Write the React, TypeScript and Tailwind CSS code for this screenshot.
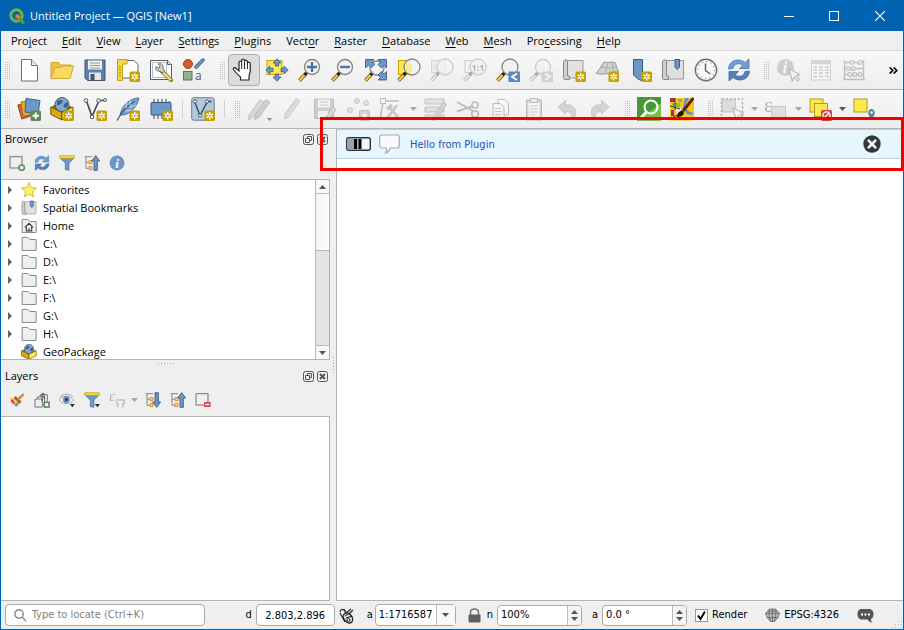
import { ReactNode } from 'react';

/* ---------- icons ---------- */

interface SvgProps {
    size?: number;
    faded?: boolean;
    children: ReactNode;
}

function Svg({ size = 24, faded, children }: SvgProps) {
    return (
        <svg width={size} height={size} viewBox="0 0 24 24" fill="none" className={faded ? 'shrink-0 opacity-35 grayscale' : 'shrink-0'} aria-hidden="true">
            {children}
        </svg>
    );
}

const StarBadge = () => (
    <g>
        <rect x="13.5" y="13.5" width="10.5" height="10.5" rx="1.5" fill="#c4a000" />
        <path d="M18.75 15v7.5M15.5 16.9l6.5 3.7M22 16.9l-6.5 3.7" stroke="#fff" strokeWidth="1.4" />
        <circle cx="18.75" cy="18.75" r="1" fill="#c4a000" />
    </g>
);

const Lens = ({ x = 14, y = 9, r = 7.5 }) => (
    <g>
        <path d="M1.5 22.5l6.5-7" stroke="#5c4a12" strokeWidth="3.6" />
        <path d="M1.8 22.2l5-5.4" stroke="#fcd03a" strokeWidth="2.2" />
        <path d="M6.5 17l3-3" stroke="#1d1d1d" strokeWidth="2.6" />
        <circle cx={x} cy={y} r={r} fill="#f1f1ef" fillOpacity="0.85" stroke="#858585" strokeWidth="1.3" />
    </g>
);

const NewFile = () => (
    <Svg><path d="M4.5 1.5h10l6 6v15.5h-16z" fill="#fff" stroke="#6d6d6d" /><path d="M14.5 1.5v6h6" fill="#e6e6e6" stroke="#6d6d6d" /></Svg>
);

const OpenFolder = () => (
    <Svg>
        <path d="M1 20V4.5h7.5l2 2.5H21v4" fill="#edc23f" stroke="#cfa52e" />
        <path d="M1 20.5L5 9.5h6l2-1.5h10.5l-3.5 12.5z" fill="#fdd95f" stroke="#d3a93a" />
    </Svg>
);

const Save = () => (
    <Svg>
        <path d="M2 2h20v20.5H4.5L2 20z" fill="#5b7fae" stroke="#40546e" />
        <rect x="5" y="2.5" width="14" height="9" fill="#f1f1f1" />
        <path d="M7 5h10M7 7.5h10M7 10h10" stroke="#999" />
        <rect x="6" y="14.5" width="12" height="7.5" fill="#e4e4e4" />
        <rect x="7.5" y="16" width="4" height="6" fill="#45556c" />
    </Svg>
);

const NewLayout = () => (
    <Svg>
        <path d="M5 2.5h13l4 4V20H5z" fill="#fff" stroke="#666" />
        <path d="M1.5 1.5h9.5v4.5H6.5v16.5h-5z" fill="#f6d54c" stroke="#c4a000" />
        <path d="M3 9h2M3 12h2M3 15h2M3 18h2" stroke="#a18400" />
        <StarBadge />
    </Svg>
);

const LayoutManager = () => (
    <Svg>
        <path d="M1.5 2.5h17l4 4v15h-21z" fill="#fff" stroke="#5c5c5c" />
        <path d="M3.5 4.5h14v15h-14z" stroke="#a8bbd5" />
        <path d="M18.5 2.5v4h4" stroke="#5c5c5c" fill="#ddd" />
        <path d="M12 12.5l10 9.5" stroke="#8b6f17" strokeWidth="4" strokeLinecap="round" />
        <path d="M14.5 15l7 6.5" stroke="#edd66d" strokeWidth="2.5" strokeLinecap="round" />
        <path d="M7 8.500l3 2 1-3-2-1.500c4-1 6 1 5 5l2 2-3 2-2-2c-3 .5-5-1-4-4.500z" fill="#ccc" stroke="#666" strokeWidth=".9" />
    </Svg>
);

const StyleManager = () => (
    <Svg>
        <circle cx="6" cy="6" r="4.500" fill="#d45e2e" stroke="#a04015" />
        <path d="M14 9l7-7" stroke="#3d5878" strokeWidth="3.500" strokeLinecap="round" />
        <path d="M14 9l7-7" stroke="#6d97c4" strokeWidth="1.800" strokeLinecap="round" />
        <rect x="1.500" y="13.500" width="8.500" height="8.500" fill="#8fb28b" stroke="#4e7d50" />
        <text x="13" y="22" fontSize="12" fill="#555">a</text>
    </Svg>
);

const Hand = () => (
    <Svg>
        <path
            d="M8.500 22v-3C6 17 3.500 14 1.500 11.500c-.7-2 1.500-2.300 2.700-1L7 13V4.500c0-2 2.500-2 2.700 0V2.500c.2-2 2.600-2 2.800 0V3.500c.3-1.800 2.700-1.700 2.900.3v1.400c.4-1.700 2.700-1.500 2.800.5 0 5 1 8-1.200 12.500V22z"
            fill="#fff" stroke="#222" strokeWidth="1.200"
        />
        <path d="M9.700 4.500V11M12.500 3.500V11M15.400 4.500V11" stroke="#222" />
    </Svg>
);

const PanArrows = () => (
    <Svg>
        <rect x="2" y="2.500" width="15" height="14" fill="#fce94f" stroke="#c4a000" />
        <path
            d="M12 .8l4 4.200h-2.400v3h-3.200V5H8zM12 23.200l4-4.200h-2.400v-3h-3.200v3H8zM.8 12L5 8v2.400h3v3.200H5V16zM23.200 12L19 8v2.400h-3v3.200h3V16z"
            fill="#6b97c9" stroke="#375d8a" strokeWidth=".8"
        />
    </Svg>
);

const ZoomIn = () => <Svg><Lens /><path d="M14 4v10M9 9h10" stroke="#4d76a6" strokeWidth="2.400" /></Svg>;
const ZoomOut = () => <Svg><Lens /><path d="M9 9h10" stroke="#4d76a6" strokeWidth="2.400" /></Svg>;

const ZoomFull = () => (
    <Svg>
        <Lens x={13} y={10} r={7} />
        <path
            d="M1.500 1.500h8.500L8 3.500l2.700 2.700-3.500 3.500L4.500 7l-3 3zM22.500 1.500v8.500L20 7.500l-2.500 2.500-3.500-3.500L16.500 4 14 1.500zM22.500 22H14l2.500-2.500-2.500-2.500 3.500-3.500 2.500 2.500 2.500-2.500z"
            fill="#6b97c9" stroke="#375d8a" strokeWidth=".9"
        />
    </Svg>
);

const ZoomSelection = () => (
    <Svg><rect x="1.500" y="2.500" width="10" height="14" fill="#fce94f" stroke="#c4a000" /><Lens x={15} y={9} r={8} /><path d="M9 5.500h6v9l-3 .5-3-2z" fill="#f5ea8b" /></Svg>
);

const ZoomLayer = () => (
    <Svg faded><rect x="1.500" y="2.500" width="10" height="12" fill="#ddd" stroke="#999" /><Lens x={15} y={9} r={8} /><path d="M15 2.500v13" stroke="#bbb" /></Svg>
);

const ZoomNative = () => (
    <Svg faded>
        <rect x="2" y="2.500" width="13" height="12" fill="#eee" stroke="#888" />
        <Lens x={15} y={9} r={8} />
        <text x="15" y="12.500" fontSize="9" fontWeight="700" textAnchor="middle" fill="#333">1:1</text>
    </Svg>
);

const ZoomLast = () => (
    <Svg><Lens x={14} y={9} r={8} /><rect x="12.500" y="13.500" width="11.500" height="10.500" fill="#5b87b9" /><path d="M21 15.500L16 18.700l5 3.200" stroke="#fff" strokeWidth="1.800" /></Svg>
);

const ZoomNext = () => (
    <Svg faded><Lens /><rect x="12.500" y="13.500" width="11.500" height="10.500" fill="#999" /><path d="M16 15.500l5 3.200-5 3.200" stroke="#fff" strokeWidth="1.800" /></Svg>
);

const MapView = () => (
    <Svg>
        <path d="M5 2.500h16V20H5z" fill="#e2e2e2" stroke="#999" />
        <path d="M1.500 4c0-3 4-3 4 0v14h2v3.500H3c-1 0-1.500-.7-1.500-1.500z" fill="#d0d0d0" stroke="#888" />
        <StarBadge />
    </Svg>
);

const Map3D = () => (
    <Svg>
        <path d="M9 4c4 1.500 8-1 11 .5l3.500 9.500c-4-1-7 2.500-10 2-4-1-6 1.500-12.500-1C4 13 6 8 9 4z" fill="#d1d1d1" stroke="#999" />
        <path d="M6 9.500c5 0 9 1 15.500-.5M13 5l-3 10.500M17 4.500l2 10" stroke="#aaa" />
        <StarBadge />
    </Svg>
);

const NewBookmark = () => (
    <Svg><path d="M5.500 1.500h9V23l-4.500-2-4.500-4z" fill="#6b97c9" stroke="#3a5a80" /><StarBadge /></Svg>
);

const Bookmarks = ({ size = 24 }) => (
    <Svg size={size}>
        <path d="M5 2.500h17.500V21H5z" fill="#dfdfdf" stroke="#999" />
        <path d="M1.500 4c0-3 4-3 4 0v14h2v3.500H3c-1 0-1.500-.7-1.500-1.500z" fill="#cfcfcf" stroke="#888" />
        <path d="M14 1.500h4.500v7.500L16.200 11.500 14 9z" fill="#6b97c9" stroke="#3a5a80" />
    </Svg>
);

const Clock = () => (
    <Svg>
        <circle cx="12" cy="12" r="10.700" fill="#fafafa" stroke="#707070" strokeWidth="1.400" />
        <circle cx="12" cy="12" r="8.500" stroke="#6690c0" strokeWidth="1.300" strokeDasharray="1 3.450" />
        <path d="M11.500 5.500v7l5 3.500" stroke="#666" strokeWidth="1.500" />
    </Svg>
);

const Refresh = ({ size = 24 }) => (
    <Svg size={size}>
        <path d="M1.500 11C1.500 3 11-1 18 4.500L22 1v9.500h-9.500L16 7C11 4.500 7 6 6 10.500z" fill="#6d9ed8" stroke="#4b78ac" strokeWidth=".8" />
        <path d="M22.500 13c0 8-9.500 12-16.500 6.500L2 23v-9.500h9.500L8 17c5 2.500 9 1 10-3.500z" fill="#4f83bf" stroke="#41699a" strokeWidth=".8" />
    </Svg>
);

const Cursor = () => <path d="M13 11l3.200 12 2.300-4 3 4 1.800-1.500-3-3.800 4-1z" fill="#fff" stroke="#555" strokeWidth="1.200" />;

const Identify = () => (
    <Svg faded>
        <circle cx="9.500" cy="9.500" r="8.500" fill="#888" />
        <text x="9" y="15" fontSize="16" fontWeight="700" fontStyle="italic" textAnchor="middle" fill="#fff" className="font-['Liberation_Serif',serif]">i</text>
        <Cursor />
    </Svg>
);

const AttributeTable = () => (
    <Svg faded>
        <rect x="2.500" y="2.500" width="19" height="19.500" fill="#fff" stroke="#999" />
        <path d="M3 4.500h18" stroke="#999" strokeWidth="3.500" />
        <path d="M4.500 9H8M10 9h4M16 9h4M4.500 12H8M10 12h4M16 12h4M4.500 15H8M10 15h4M16 15h4M4.500 18.500H8M10 18.500h4M16 18.500h4" stroke="#888" strokeWidth="1.300" />
    </Svg>
);

const Abacus = () => (
    <Svg faded>
        <path d="M2.500 2v19M21.500 2v19M1 21.500h22M2.500 4.500h19M2.500 10.500h19M2.500 16.500h19" stroke="#666" strokeWidth="1.400" />
        <g fill="#ddd" stroke="#666" strokeWidth="1.200">
            <circle cx="10" cy="4.500" r="2" /><circle cx="18" cy="4.500" r="2" />
            <circle cx="6" cy="10.500" r="2" /><circle cx="11" cy="10.500" r="2" />
            <circle cx="8" cy="16.500" r="2" /><circle cx="13" cy="16.500" r="2" /><circle cx="18" cy="16.500" r="2" />
        </g>
    </Svg>
);

const DataSource = () => (
    <Svg>
        <path d="M.8 8l11-2 2 13-9 3z" fill="#d45e2e" stroke="#9f4316" />
        <path d="M4 5l12-2 1 14-11 2z" fill="#e6a92b" stroke="#a9781c" />
        <path d="M9 1.500l14 2-2 13.500-13-2z" fill="#6b97c9" stroke="#3d608c" />
        <rect x="13.500" y="13.500" width="10.500" height="10.500" rx="1.500" fill="#5a8c5a" />
        <path d="M18.750 15.500v6.500M15.500 18.750H22" stroke="#fff" strokeWidth="1.800" />
    </Svg>
);

const GeoPackageBox = ({ size = 24, badge = true }) => (
    <Svg size={size}>
        <path d="M1 10l7-4 15 4-11 5z" fill="#8a6d00" />
        <circle cx="12" cy="7.500" r="7" fill="#84a9d1" stroke="#3c5c84" />
        <path d="M7 4l4-1.500 2 2-3 3-3 1zM14 7l3-2 1.500 2-2 4-3-1z" fill="#3f5f87" />
        <path d="M.8 10L12 15.500V23L.8 17.500z" fill="#d7a90a" stroke="#6f5700" />
        <path d="M12 15.500L23 10v7.500L12 23z" fill="#fce94f" stroke="#6f5700" />
        {badge && <StarBadge />}
    </Svg>
);

const NewShapefile = () => (
    <Svg>
        <path d="M3.500 4l5.500 15.500L16 3.500h6" stroke="#3d5064" strokeWidth="1.700" />
        <g fill="#fff" stroke="#555"><circle cx="3" cy="3.500" r="1.800" /><circle cx="9" cy="20" r="1.800" /><circle cx="15.500" cy="3.500" r="1.800" /><circle cx="22" cy="3" r="1.500" /></g>
        <StarBadge />
    </Svg>
);

const NewSpatialite = () => (
    <Svg>
        <path d="M23 1C14 1 6 8 4 18c7 1 16-5 19-17z" fill="#7ea5d2" stroke="#49709d" />
        <path d="M19 4C11 9 5 16 1 23.500" stroke="#39597e" strokeWidth="1.300" />
        <path d="M10 11l.5-5M14 8V3M9 14l7-1M13 9.500l7-1" stroke="#c5d8ee" />
        <StarBadge />
    </Svg>
);

const NewMemory = () => (
    <Svg>
        <path d="M5 2v20M9 2v20M13 2v20M17 2v20M20.500 4v14" stroke="#48617f" strokeWidth="1.200" />
        <rect x="2" y="5.500" width="20" height="12.500" rx="1" fill="#6b97c9" stroke="#3d5878" />
        <StarBadge />
    </Svg>
);

const NewVirtual = () => (
    <Svg>
        <rect x=".7" y=".7" width="22.500" height="22.500" rx="2" fill="#b3c8de" stroke="#637f9f" />
        <path d="M3.500 4.500L9 18.500l7.500-14h4" stroke="#3d5064" strokeWidth="1.500" />
        <g fill="#fff" stroke="#555"><circle cx="4" cy="4.500" r="1.600" /><circle cx="9" cy="18.500" r="1.600" /><circle cx="16" cy="4.500" r="1.600" /></g>
        <StarBadge />
    </Svg>
);

const pencil = 'M2 18L13 2.500l4 2.500L6 20.500l-4.500 2.500z';

const Edits = () => (
    <Svg faded><path d={pencil} fill="#aaa" stroke="#777" /><path d={pencil} fill="#888" stroke="#666" transform="translate(6 0)" /></Svg>
);
const ToggleEdit = () => <Svg faded><path d={pencil} fill="#bbb" stroke="#777" transform="translate(3 -1)" /><path d="M6 18.500l11-15" stroke="#888" /></Svg>;
const SaveEdits = () => (
    <Svg faded>
        <path d="M1.500 2h19v19.500h-19z" fill="#888" stroke="#555" />
        <path d="M5 2.500h12v8H5zM5 14h10v7H5z" fill="#eee" />
        <path d="M7 5h8M7 8h8" stroke="#777" />
        <path d="M12 22l8-12 3 2-7 11z" fill="#aaa" stroke="#666" />
    </Svg>
);
const AddPoint = () => (
    <Svg faded>
        <g fill="#bbb" stroke="#777"><circle cx="4" cy="13" r="2.500" /><circle cx="11" cy="4" r="2.500" /><circle cx="20" cy="6" r="2.500" /></g>
        <rect x="13.500" y="13.500" width="10" height="10" rx="1" fill="#999" stroke="#666" />
        <path d="M18.500 15l1 2.500h2.500l-2 1.600.8 2.600-2.300-1.500-2.300 1.500.8-2.600-2-1.600h2.500z" fill="#fff" />
    </Svg>
);
const VertexTool = () => (
    <Svg faded>
        <path d="M4 5L1 23M6 4h14" stroke="#555" strokeWidth="1.500" />
        <rect x="1.500" y="1.500" width="5" height="5" fill="#fff" stroke="#555" />
        <path d="M10 10l10 11M18 8L9 20" stroke="#777" strokeWidth="2.500" />
        <path d="M8 12l5-4" stroke="#666" strokeWidth="3" />
    </Svg>
);
const MultiEdit = () => (
    <Svg faded><path d="M2 2h19v5H2zM2 10h19v5H2zM2 18h19v4.500H2z" fill="#c4c4a8" stroke="#666" /><path d="M10 21L20 5l3.500 2L14 22l-4 2z" fill="#999" stroke="#666" /></Svg>
);
const Cut = () => (
    <Svg faded><path d="M1 5l16 9M1 14.500L17 9" stroke="#555" strokeWidth="2" /><circle cx="19" cy="8" r="3" stroke="#555" strokeWidth="1.600" /><circle cx="19" cy="17" r="3.300" stroke="#555" strokeWidth="1.600" /></Svg>
);
const Copy = () => (
    <Svg faded>
        <path d="M9 2.500h7l3.500 3.500V18H9z" fill="#fff" stroke="#555" /><path d="M4 6.500h7.500L15 10v12.500H4z" fill="#fff" stroke="#555" />
        <path d="M6 11.500h6M6 14.500h7M6 17.500h7M6 20h7" stroke="#777" />
    </Svg>
);
const Paste = () => (
    <Svg faded>
        <rect x="4.500" y="3" width="15" height="20" fill="#999" stroke="#555" /><rect x="6.500" y="5.500" width="11" height="15.500" fill="#fff" />
        <rect x="8.500" y="1.500" width="7" height="4" fill="#ddd" stroke="#555" /><path d="M8 9h8M8 12h8M8 15h8M8 18h5" stroke="#777" />
    </Svg>
);
const undoPath = 'M3 10L10.500 3.500V8c7-1 11 3 10 9.500-.4 2.500-2 4.500-5 5.500 2-3 2-9-5-8.500V17z';
const Undo = () => <Svg faded><path d={undoPath} fill="#999" stroke="#777" /></Svg>;
const Redo = () => <Svg faded><path d={undoPath} fill="#999" stroke="#777" transform="matrix(-1 0 0 1 24 0)" /></Svg>;

const GreenSearch = () => (
    <Svg>
        <rect width="24" height="24" fill="#459a38" /><path d="M0 24L24 6v18z" fill="#7cbe4c" />
        <circle cx="14" cy="10" r="6.500" stroke="#fff" strokeWidth="2" /><path d="M9.500 15L3.500 21.500" stroke="#fff" strokeWidth="3" />
    </Svg>
);
const OsmMap = () => (
    <Svg>
        <rect y="1" width="24" height="22.500" fill="#fbc51b" />
        <path d="M0 1h5v4H0zM1 13h3v6H1z" fill="#b52557" /><path d="M2 6h8v4H2zM8 2h4v3H8z" fill="#83bd52" /><path d="M6 11h5v5H6z" fill="#eee" />
        <path d="M15 1h4l-4 8 3 5 5 2v2l-6-1-4-6z" fill="#5c92cf" /><path d="M0 22l7-4 4 5M0 9l10 3M5 1v12" stroke="#4b3b1b" />
        <path d="M13 14L23.500 1" stroke="#5c2308" strokeWidth="3" /><path d="M7 20c1-5 3-7 6-6l1 2c-1 3-4 4-7 4z" fill="#20160e" />
    </Svg>
);

const SelectFeatures = () => (
    <Svg faded><rect x="1.500" y="2" width="21" height="19.500" stroke="#333" strokeWidth="1.500" strokeDasharray="2.500 1.500" /><rect x="2.500" y="3" width="13" height="12" fill="#b5b5a5" stroke="#777" /><Cursor /></Svg>
);
const SelectExpression = () => (
    <Svg faded>
        <text x="0" y="15" fontSize="21" fill="#333" className="font-['Liberation_Serif',serif]">ε</text>
        <rect x="7.500" y="9.500" width="14" height="13" fill="#bdbda8" stroke="#777" />
    </Svg>
);
const Deselect = () => (
    <Svg>
        <rect x="2" y="2" width="13" height="13" fill="#fce94f" stroke="#b49a1e" /><rect x="6.500" y="6.500" width="13" height="13" fill="#fce94f" stroke="#b49a1e" />
        <rect x="13" y="13" width="11" height="11" rx="1.500" fill="#d7404a" /><circle cx="18.500" cy="18.500" r="3.600" stroke="#fff" strokeWidth="1.400" /><path d="M16 21l5-5" stroke="#fff" strokeWidth="1.400" />
    </Svg>
);
const SelectLocation = () => (
    <Svg>
        <rect x="2" y="2" width="13" height="13" fill="#fce94f" stroke="#b49a1e" />
        <path d="M19.500 23.500l-3-6c-1-3 1-5.500 3-5.500s4 2.500 3 5.500z" fill="#5d7f98" /><circle cx="19.500" cy="15.500" r="1.300" fill="#fff" />
    </Svg>
);

/* small panel icons */
const AddLayer = () => (
    <Svg size={16}><rect x="1.500" y="2.500" width="18" height="17" stroke="#777" strokeWidth="1.500" /><circle cx="19" cy="19" r="4" fill="#fff" stroke="#5a8c5a" strokeWidth="2.500" /></Svg>
);
const Filter = ({ drop = false }) => (
    <Svg size={16}>
        <path d="M1.500 4.500h21l-7.500 8V23l-5.500-1v-9.500z" fill="#6b97c9" stroke="#4a6f9c" /><path d="M1 1h22v4H1z" fill="#f4dd40" stroke="#c4a000" />
        {drop && <path d="M16 18h8l-4 5z" fill="#333" />}
    </Svg>
);
const TreeArrow = ({ down = false }) => (
    <Svg size={16}>
        <path d="M1 2.500h11M3 2.500V20h6M3 11h6" stroke="#888" strokeWidth="1.500" />
        <path d="M7.500 8.500h4.500V13H7.500zM7.500 17.500h4.500V22H7.500z" fill="#ffd28a" stroke="#ee8b22" strokeWidth="1.500" />
        <path d="M17.500 1l6 8h-3.500v14h-5V9h-3.500z" fill="#6b97c9" stroke="#33587f" strokeWidth="1.300" transform={down ? 'matrix(1 0 0 -1 0 24)' : undefined} />
    </Svg>
);
const Info = () => (
    <Svg size={16}>
        <circle cx="12" cy="12" r="10.500" fill="#6b97c9" stroke="#50779f" />
        <text x="12" y="19" fontSize="20" fontWeight="700" fontStyle="italic" textAnchor="middle" fill="#fff" className="font-['Liberation_Serif',serif]">i</text>
    </Svg>
);
const Star = () => (
    <Svg size={16}><path d="M12 .8l3.200 7.700 8.300.5-6.500 5.200 2.200 8.300-7.200-4.500-7.200 4.500L7 14.200.5 9l8.300-.5z" fill="#fdf06a" stroke="#d1b01c" strokeWidth="1.300" /></Svg>
);
const Folder = ({ home = false }) => (
    <Svg size={16}>
        <path d="M1.700 2.200h8.500l3 3h9.500v16.500h-21z" fill="#efefef" stroke="#8a8a8a" strokeWidth="1.500" />
        {home && <path d="M6 14l6-6 6 6M8 13v6.500h8V13M12 19v-4" stroke="#333" strokeWidth="1.600" />}
    </Svg>
);
const StyleBrush = () => (
    <Svg size={16}>
        <path d="M1 9l8-1 8 8-6 6c-4-1-8-6-10-13z" fill="#f3cf55" />
        <path d="M2 13l4-2 3 6-3 1z" fill="#d9455b" />
        <path d="M8 19l5-4 2 3-4 4z" fill="#5f92cf" />
        <path d="M8.500 7.500l9 8.500" stroke="#a55f22" strokeWidth="4" />
        <path d="M14 11l7-7" stroke="#c98a45" strokeWidth="3.500" strokeLinecap="round" />
    </Svg>
);
const AddGroup = () => (
    <Svg size={16}>
        <path d="M1.500 10.500h11v12h-11z" stroke="#777" strokeWidth="1.500" />
        <path d="M5.500 10V7H16v12h-3M9.500 7V4H20v10" stroke="#777" strokeWidth="1.500" />
        <path d="M12 14V2.500q1.500-2 3 0V11" stroke="#444" strokeWidth="1.300" />
        <rect x="15.500" y="15.500" width="7" height="7" fill="#fff" stroke="#5a8c5a" strokeWidth="2.500" />
    </Svg>
);
const Eye = () => (
    <Svg size={16}>
        <path d="M0 12C5 5 16 4 22 12c-6 7-16 7-22 0z" fill="#f4f4f4" stroke="#999" strokeWidth="1.300" /><path d="M1 8C6 2 16 2 21 7" stroke="#999" strokeWidth="1.300" />
        <circle cx="11" cy="11.500" r="4.500" fill="#6b97c9" stroke="#456890" /><circle cx="11" cy="11.500" r="2" fill="#223" /><path d="M16 18h8l-4 5z" fill="#333" />
    </Svg>
);
const FilterExpression = () => (
    <Svg size={16} faded>
        <text x="0" y="14" fontSize="22" fill="#333" className="font-['Liberation_Serif',serif]">ε</text>
        <path d="M10 12h13v4l-2 2v5M13 23v-6l-3-2" stroke="#666" strokeWidth="2.500" />
    </Svg>
);
const RemoveLayer = () => (
    <Svg size={16}><rect x="1.500" y="2.500" width="18" height="17" stroke="#777" strokeWidth="1.500" /><rect x="13.500" y="15" width="10" height="7.500" rx="1" fill="#e0444c" /><path d="M15.500 18.700h6" stroke="#fff" strokeWidth="2" /></Svg>
);

/* ---------- building blocks ---------- */

function ToolButton({ label, icon, active }: { label: string; icon: ReactNode; active?: boolean }) {
    return (
        <button
            aria-label={label}
            title={label}
            className={`flex h-8 w-8 mr-px shrink-0 items-center justify-center rounded-sm ${active ? 'border border-[#adadad] bg-[#dcdcdc]' : ''}`}
        >
            {icon}
        </button>
    );
}

function Grip() {
    return (
        <svg width="5" height="17" className="ml-1 mr-[3px] shrink-0" shapeRendering="crispEdges" aria-hidden="true">
            <path d="M.5 0v17M2.500 0v17M4.500 0v17" stroke="#bcbcbc" strokeDasharray="1 1" />
        </svg>
    );
}

function Drop({ dark }: { dark?: boolean }) {
    return (
        <button aria-label="More options" className="flex w-[11px] shrink-0 justify-center">
            <svg width="7" height="4"><path d="M0 0h7L3.500 4z" fill={dark ? '#555' : '#a6a6a6'} /></svg>
        </button>
    );
}

const Separator = () => <div className="mx-1 h-[18px] w-px shrink-0 bg-[#d2d2d2]" />;

function PanelHeader({ title }: { title: string }) {
    return (
        <div className="flex h-5 items-center gap-[3px] pl-1 pr-0.5">
            <h2 className="flex-1">{title}</h2>
            <button aria-label={`Float ${title}`}>
                <svg width="11" height="11" fill="none" stroke="#555" className="block"><rect x=".5" y=".5" width="10" height="10" rx="2" /><path d="M4.500 4.500v-2h4v4h-2M2.500 4.500h4v4h-4z" /></svg>
            </button>
            <button aria-label={`Close ${title}`}>
                <svg width="11" height="11" fill="none" stroke="#555" className="block"><rect x=".5" y=".5" width="10" height="10" rx="2" /><path d="M3 3l5 5M8 3L3 8" strokeWidth="2" /></svg>
            </button>
        </div>
    );
}

function PanelButton({ label, children }: { label: string; children: ReactNode }) {
    return <button aria-label={label} title={label} className="flex h-6 w-[25px] items-center justify-center">{children}</button>;
}

function SpinBox({ id, label, clipped, value }: { id: string; label: string; clipped: string; value: string }) {
    return (
        <div className="flex shrink-0 items-center">
            <label htmlFor={id} aria-label={label} className="mr-1">{clipped}</label>
            <div className="flex h-[21px] overflow-hidden rounded-sm border border-[#aaa] bg-white">
                <input id={id} defaultValue={value} className="w-[69px] px-[3px] outline-none" />
                <div className="flex w-[14px] flex-col items-center justify-center gap-[3px] border-l border-[#bbb] bg-[#f4f4f4]">
                    <button aria-label={`Increase ${label}`}><svg width="7" height="4" className="block"><path d="M0 4h7L3.500 0z" fill="#555" /></svg></button>
                    <button aria-label={`Decrease ${label}`}><svg width="7" height="4" className="block"><path d="M0 0h7L3.500 4z" fill="#555" /></svg></button>
                </div>
            </div>
        </div>
    );
}

/* ---------- sections ---------- */

// the char after "&" is the mnemonic
const menus = ['Pro&ject', '&Edit', '&View', '&Layer', '&Settings', '&Plugins', 'Vect&or', '&Raster', '&Database', '&Web', '&Mesh', 'Pro&cessing', '&Help'];

function TitleBar() {
    return (
        <header className="flex h-[31px] shrink-0 items-center bg-[#0063b1] pl-2 text-white">
            <svg width="16" height="16" viewBox="0 0 16 16" fill="none" aria-hidden="true">
                <circle cx="7.500" cy="7.500" r="5.700" stroke="#77b043" strokeWidth="3" />
                <path d="M8 8l7 7.500" stroke="#4d9a3a" strokeWidth="3.500" />
                <path d="M6.500 6.500h4.500l-1 1 2 2-2 2-2-2-1.500 1z" fill="#ee7d30" />
            </svg>
            <h1 className="ml-[5px] flex-1">Untitled Project — QGIS [New1]</h1>
            <button aria-label="Minimize" className="flex h-full w-[45px] items-center justify-center"><svg width="10" height="10"><path d="M0 5.500h10" stroke="#fff" /></svg></button>
            <button aria-label="Maximize" className="flex h-full w-[45px] items-center justify-center"><svg width="10" height="10" fill="none"><rect x=".5" y=".5" width="9" height="9" stroke="#fff" /></svg></button>
            <button aria-label="Close" className="flex h-full w-[47px] items-center justify-center"><svg width="10" height="10"><path d="M0 0l10 10M10 0L0 10" stroke="#fff" strokeWidth="1.200" /></svg></button>
        </header>
    );
}

function MenuBar() {
    return (
        <nav className="flex h-5 shrink-0 items-center border-b border-[#d8d8d8] pl-0.5">
            {menus.map((m) => {
                const [before, after] = m.split('&');
                return (
                    <button key={m} className="pl-2 pr-[7px]">
                        {before}<span className="underline underline-offset-2">{after[0]}</span>{after.slice(1)}
                    </button>
                );
            })}
        </nav>
    );
}

const barClass = 'flex h-[39px] shrink-0 items-center overflow-hidden border-b border-[#b4b4b4] bg-linear-to-b from-[#f8f8f8] to-[#ededed]';

function MainToolbar() {
    return (
        <div className={barClass}>
            <Grip />
            <ToolButton label="New Project" icon={<NewFile />} />
            <ToolButton label="Open Project" icon={<OpenFolder />} />
            <ToolButton label="Save Project" icon={<Save />} />
            <ToolButton label="New Print Layout" icon={<NewLayout />} />
            <ToolButton label="Layout Manager" icon={<LayoutManager />} />
            <ToolButton label="Style Manager" icon={<StyleManager />} />
            <div className="w-[5px]" />
            <Grip />
            <ToolButton label="Pan Map" icon={<Hand />} active />
            <ToolButton label="Pan Map to Selection" icon={<PanArrows />} />
            <ToolButton label="Zoom In" icon={<ZoomIn />} />
            <ToolButton label="Zoom Out" icon={<ZoomOut />} />
            <ToolButton label="Zoom Full" icon={<ZoomFull />} />
            <ToolButton label="Zoom to Selection" icon={<ZoomSelection />} />
            <ToolButton label="Zoom to Layer" icon={<ZoomLayer />} />
            <ToolButton label="Zoom to Native Resolution" icon={<ZoomNative />} />
            <ToolButton label="Zoom Last" icon={<ZoomLast />} />
            <ToolButton label="Zoom Next" icon={<ZoomNext />} />
            <ToolButton label="New Map View" icon={<MapView />} />
            <ToolButton label="New 3D Map View" icon={<Map3D />} />
            <ToolButton label="New Spatial Bookmark" icon={<NewBookmark />} />
            <ToolButton label="Show Spatial Bookmarks" icon={<Bookmarks />} />
            <ToolButton label="Temporal Controller" icon={<Clock />} />
            <ToolButton label="Refresh" icon={<Refresh />} />
            <div className="w-1" />
            <Grip />
            <ToolButton label="Identify Features" icon={<Identify />} />
            <ToolButton label="Open Attribute Table" icon={<AttributeTable />} />
            <ToolButton label="Field Calculator" icon={<Abacus />} />
            <button aria-label="More tools" className="ml-auto mr-[5px]">
                <svg width="9" height="7" fill="none"><path d="M.7.500l3 3-3 3M4.700.500l3 3-3 3" stroke="#000" strokeWidth="1.700" /></svg>
            </button>
        </div>
    );
}

function LayerToolbar() {
    return (
        <div className={barClass}>
            <Grip />
            <ToolButton label="Data Source Manager" icon={<DataSource />} />
            <ToolButton label="New GeoPackage Layer" icon={<GeoPackageBox />} />
            <ToolButton label="New Shapefile Layer" icon={<NewShapefile />} />
            <ToolButton label="New SpatiaLite Layer" icon={<NewSpatialite />} />
            <ToolButton label="New Temporary Scratch Layer" icon={<NewMemory />} />
            <Separator />
            <ToolButton label="New Virtual Layer" icon={<NewVirtual />} />
            <Separator />
            <div className="w-0.5" />
            <Grip />
            <ToolButton label="Current Edits" icon={<div className="flex items-end"><Edits /><svg width="5" height="3" className="-ml-1"><path d="M0 0h5L2.500 3z" fill="#888" /></svg></div>} />
            <ToolButton label="Toggle Editing" icon={<ToggleEdit />} />
            <ToolButton label="Save Layer Edits" icon={<SaveEdits />} />
            <ToolButton label="Add Point Feature" icon={<AddPoint />} />
            <ToolButton label="Vertex Tool" icon={<VertexTool />} />
            <Drop />
            <ToolButton label="Modify Attributes" icon={<MultiEdit />} />
            <ToolButton label="Cut Features" icon={<Cut />} />
            <ToolButton label="Copy Features" icon={<Copy />} />
            <ToolButton label="Paste Features" icon={<Paste />} />
            <ToolButton label="Undo" icon={<Undo />} />
            <ToolButton label="Redo" icon={<Redo />} />
            <div className="w-1" />
            <Grip />
            <ToolButton label="QuickMapServices Search" icon={<GreenSearch />} />
            <ToolButton label="OSM Place Search" icon={<OsmMap />} />
            <div className="w-[5px]" />
            <Grip />
            <ToolButton label="Select Features" icon={<SelectFeatures />} />
            <Drop />
            <ToolButton label="Select by Expression" icon={<SelectExpression />} />
            <Drop />
            <ToolButton label="Deselect Features" icon={<Deselect />} />
            <Drop dark />
            <ToolButton label="Select by Location" icon={<SelectLocation />} />
        </div>
    );
}

const treeItems = [
    { name: 'Favorites', icon: <Star /> },
    { name: 'Spatial Bookmarks', icon: <Bookmarks size={16} /> },
    { name: 'Home', icon: <Folder home /> },
    { name: 'C:\\', icon: <Folder /> },
    { name: 'D:\\', icon: <Folder /> },
    { name: 'E:\\', icon: <Folder /> },
    { name: 'F:\\', icon: <Folder /> },
    { name: 'G:\\', icon: <Folder /> },
    { name: 'H:\\', icon: <Folder /> },
    { name: 'GeoPackage', icon: <GeoPackageBox size={16} badge={false} />, leaf: true },
];

function ScrollBar() {
    return (
        <div className="flex w-[14px] shrink-0 flex-col border-l border-[#b9b9b9] bg-[#e4e4e4]">
            <button aria-label="Scroll up" className="flex h-[14px] items-center justify-center border-b border-[#b9b9b9] bg-[#f8f8f8]"><svg width="7" height="4"><path d="M0 4h7L3.500 0z" fill="#555" /></svg></button>
            <div className="basis-[32%] border-b border-[#b9b9b9] bg-linear-to-r from-[#f2f2f2] to-white" />
            <button aria-label="Scroll down" className="mt-auto flex h-[14px] items-center justify-center border-t border-[#b9b9b9] bg-[#f8f8f8]"><svg width="7" height="4"><path d="M0 0h7L3.500 4z" fill="#555" /></svg></button>
        </div>
    );
}

function BrowserPanel() {
    return (
        <section className="flex min-h-0 flex-[231_1_0] flex-col">
            <PanelHeader title="Browser" />
            <div className="flex h-[30px] items-center pb-0.5 pl-[3px]">
                <PanelButton label="Add Selected Layers"><AddLayer /></PanelButton>
                <PanelButton label="Refresh Browser"><Refresh size={16} /></PanelButton>
                <PanelButton label="Filter Browser"><Filter /></PanelButton>
                <PanelButton label="Collapse All"><TreeArrow /></PanelButton>
                <PanelButton label="Properties"><Info /></PanelButton>
            </div>
            <div className="flex min-h-0 flex-1 border border-l-0 border-[#b4b4b4] bg-white">
                <ul className="flex-1 overflow-hidden pt-px">
                    {treeItems.map((item) => (
                        <li key={item.name} className="flex h-[18px] items-center pl-[7px]">
                            <svg width="4" height="8" className="mr-[9px]">{!item.leaf && <path d="M0 0v8l4-4z" fill="#606060" />}</svg>
                            {item.icon}
                            <span className="ml-1.5">{item.name}</span>
                        </li>
                    ))}
                </ul>
                <ScrollBar />
            </div>
        </section>
    );
}

function LayersPanel() {
    return (
        <section className="flex min-h-0 flex-[235_1_0] flex-col">
            <PanelHeader title="Layers" />
            <div className="flex h-[30px] items-center pb-0.5 pl-[3px]">
                <PanelButton label="Open Layer Styling"><StyleBrush /></PanelButton>
                <PanelButton label="Add Group"><AddGroup /></PanelButton>
                <PanelButton label="Manage Map Themes"><Eye /></PanelButton>
                <PanelButton label="Filter Legend"><Filter drop /></PanelButton>
                <PanelButton label="Filter by Expression"><FilterExpression /></PanelButton>
                <Drop />
                <PanelButton label="Expand All"><TreeArrow down /></PanelButton>
                <PanelButton label="Collapse All Layers"><TreeArrow /></PanelButton>
                <PanelButton label="Remove Layer"><RemoveLayer /></PanelButton>
            </div>
            <div className="flex-1 border border-l-0 border-[#b4b4b4] bg-white" />
        </section>
    );
}

function MessageBar() {
    return (
        <div role="status" className="flex h-[30px] items-center border-b border-t border-[#b9cfe4] bg-[#e7f5fe] pl-[9px] pr-[22px] text-[#2353b5]">
            <svg width="25" height="14" fill="none" aria-hidden="true">
                <rect x=".7" y=".7" width="23.600" height="12.600" rx="2" fill="#eef7fd" stroke="#2b2f36" strokeWidth="1.400" />
                <path d="M1.500 1.500h11v11h-11z" fill="#9da3ae" />
                <path d="M9.500 2v10M14 2v10" stroke="#000" strokeWidth="3" />
            </svg>
            <svg width="21" height="20" fill="none" className="ml-2" aria-hidden="true">
                <path d="M3 1h15q2.300 0 2.300 2.500v8q0 2.500-2.300 2.500h-6.500q-1.500 4-5 5 1.500-2 1-5H3Q.7 14 .7 11.500v-8Q.7 1 3 1z" fill="#f8fafc" stroke="#a6acb2" strokeWidth="1.200" />
            </svg>
            <span className="ml-2.5 flex-1 pt-0.5">Hello from Plugin</span>
            <button aria-label="Dismiss message">
                <svg width="18" height="18" fill="none" className="block"><circle cx="9" cy="9" r="8.700" fill="#33383b" /><path d="M5.700 5.700l6.600 6.600M12.300 5.700l-6.600 6.600" stroke="#fff" strokeWidth="2.600" strokeLinecap="round" /></svg>
            </button>
        </div>
    );
}

function StatusBar() {
    return (
        <footer className="flex h-7 shrink-0 items-center pl-1 font-['DejaVu_Sans_Condensed','Open_Sans',sans-serif]">
            <label className="flex h-[22px] w-[200px] items-center rounded-sm border border-[#aaa] bg-white pl-2">
                <svg width="13" height="13" fill="none" stroke="#888" strokeWidth="1.400"><circle cx="5" cy="5" r="4.200" /><path d="M8 8l4.500 4.500" /></svg>
                <input aria-label="Locate" placeholder="Type to locate (Ctrl+K)" className="ml-1.5 w-full min-w-0 outline-none placeholder:text-[#808080]" />
            </label>
            <label htmlFor="coord" aria-label="Coordinate" className="ml-auto mr-1">d</label>
            <input id="coord" defaultValue="2.803,2.896" className="h-[22px] w-[79px] rounded-sm border border-[#aaa] bg-white text-center outline-none" />
            <button aria-label="Toggle extents" className="ml-1">
                <svg width="16" height="17" fill="none" className="block">
                    <path d="M1 5q1-4 4-2l2 3M5 2l3 5M1 6l5 9M6 7l6-5M8 9l6-6" stroke="#333" strokeWidth="1.300" />
                    <ellipse cx="9" cy="11" rx="5.500" ry="4" transform="rotate(50 9 11)" fill="#ddd" stroke="#222" strokeWidth="1.400" />
                    <path d="M6 9l5-3M7 11l6-2" stroke="#222" /><circle cx="9.500" cy="13" r="1.500" stroke="#222" />
                </svg>
            </button>
            <label htmlFor="scale" aria-label="Scale" className="ml-3 mr-0.5">a</label>
            <div className="relative flex shrink-0">
                <select id="scale" className="h-[22px] w-[81px] appearance-none rounded-sm border border-[#aaa] bg-white pl-[3px] outline-none"><option>1:1716587</option></select>
                <span className="pointer-events-none absolute inset-y-px right-px flex w-[19px] items-center justify-center border-l border-[#bbb] bg-[#f8f8f8]">
                    <svg width="7" height="4"><path d="M0 0h7L3.500 4z" fill="#555" /></svg>
                </span>
            </div>
            <button aria-label="Lock scale" className="ml-3 mr-1.5">
                <svg width="13" height="15" fill="none" className="block"><path d="M2.500 7V4.500Q2.500 1 6.500 1t4 3.500V7" stroke="#777" strokeWidth="1.600" /><rect x=".5" y="6.500" width="12" height="8" rx="1" fill="#606060" /></svg>
            </button>
            <SpinBox id="magnifier" label="Magnifier" clipped="n" value="100%" />
            <div className="w-2.5" />
            <SpinBox id="rotation" label="Rotation" clipped="a" value="0.0 °" />
            <label className="ml-2 flex items-center gap-1">
                <span className="relative flex">
                    <input type="checkbox" defaultChecked className="peer h-[13px] w-[13px] appearance-none border border-[#999] bg-white" />
                    <svg width="13" height="13" fill="none" className="pointer-events-none absolute inset-0 hidden peer-checked:block"><path d="M3 6.500l2.500 3.500L10 2.500" stroke="#000" strokeWidth="2" /></svg>
                </span>
                Render
            </label>
            <button className="ml-[18px] flex items-center gap-1">
                <svg width="15" height="14" fill="none" stroke="#666" strokeWidth=".8" aria-hidden="true">
                    <path d="M4.500 1h6L14.500 5.500l-1.500 4-3.500 4h-4l-3.500-4L.5 5.500z" fill="#bbb" />
                    <path d="M7.500 1v12.500M.5 5.500h14M2 9.500h11M2.500 3.200h10M4.500 1L4 5.500l1.500 8M10.500 1l.5 4.500-1.500 8" />
                </svg>
                EPSG:4326
            </button>
            <button aria-label="Messages" className="ml-[18px] mr-[18px]">
                <svg width="17" height="15" className="block"><path d="M4 1h9q3.500 1 3.500 5t-2.500 5q0 2 1 3.500-3-.5-4.500-3H4Q.5 10.500.5 6T4 1z" fill="#555" /><path d="M4 5.500h2v2H4zM7.500 5.500h2v2h-2zM11 5.500h2v2h-2z" fill="#fff" /></svg>
            </button>
            <svg width="11" height="11" className="shrink-0 self-end" shapeRendering="crispEdges" aria-hidden="true">
                <path d="M0 9.500h11M3 6.500h8M6 3.500h5M9 .5h2" stroke="#bbb" strokeDasharray="1 2" />
            </svg>
        </footer>
    );
}

export default function App() {
    return (
        <div className="flex h-screen flex-col border-b border-l border-r border-[#0063b1] bg-[#efefef] font-['Open_Sans','Noto_Sans',sans-serif] text-[11px] leading-4 text-black">
            <TitleBar />
            <MenuBar />
            <MainToolbar />
            <LayerToolbar />
            <div className="flex min-h-0 flex-1">
                <aside className="flex w-[329px] shrink-0 flex-col">
                    <BrowserPanel />
                    <div className="flex h-1.5 shrink-0 items-center justify-center">
                        <svg width="16" height="1" shapeRendering="crispEdges"><path d="M0 .5h16" stroke="#aaa" strokeDasharray="1 2" /></svg>
                    </div>
                    <LayersPanel />
                </aside>
                <div className="flex w-1.5 shrink-0 items-center justify-center">
                    <svg width="1" height="16" shapeRendering="crispEdges"><path d="M.5 0v16" stroke="#aaa" strokeDasharray="1 2" /></svg>
                </div>
                <main className="relative flex-1 border-b border-l border-[#b4b4b4] bg-white font-['DejaVu_Sans_Condensed','Open_Sans',sans-serif]">
                    <MessageBar />
                    <div className="pointer-events-none absolute -left-[17px] -right-px -top-3 h-[54px] border-[3px] border-[#f00000]" />
                </main>
            </div>
            <StatusBar />
        </div>
    );
}
